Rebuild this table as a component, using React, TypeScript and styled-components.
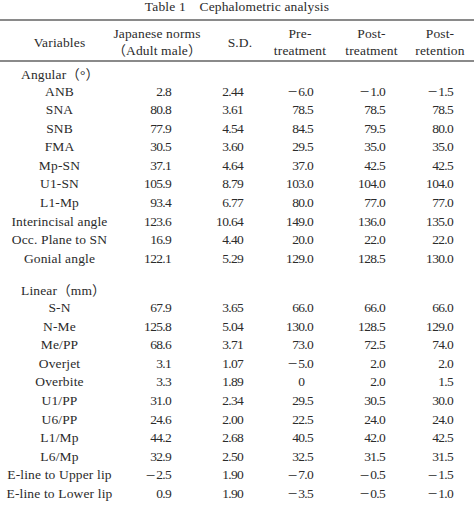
import React from 'react';
import styled, { createGlobalStyle } from 'styled-components';

/**
 * Table 1 - cephalometric analysis
 */

type Col = { width: number; shift: number; pad: number };

// one entry per column: track width, header shift (centre offset), right padding of the numbers
const COLS: Col[] = [
  { width: 119, shift: 0, pad: 0 },
  { width: 76, shift: 0, pad: 24 },
  { width: 84, shift: 3, pad: 36 },
  { width: 60, shift: -9, pad: 26 },
  { width: 71, shift: -3, pad: 25 },
  { width: 64, shift: -2, pad: 21 },
];

const TEMPLATE = COLS.map((c) => `${c.width}px`).join(' ');

type DataRow = [string, string, string, string, string, string];

const ANGULAR: DataRow[] = [
  ['ANB', '2.8', '2.44', '−6.0', '−1.0', '−1.5'],
  ['SNA', '80.8', '3.61', '78.5', '78.5', '78.5'],
  ['SNB', '77.9', '4.54', '84.5', '79.5', '80.0'],
  ['FMA', '30.5', '3.60', '29.5', '35.0', '35.0'],
  ['Mp-SN', '37.1', '4.64', '37.0', '42.5', '42.5'],
  ['U1-SN', '105.9', '8.79', '103.0', '104.0', '104.0'],
  ['L1-Mp', '93.4', '6.77', '80.0', '77.0', '77.0'],
  ['Interincisal angle', '123.6', '10.64', '149.0', '136.0', '135.0'],
  ['Occ. Plane to SN', '16.9', '4.40', '20.0', '22.0', '22.0'],
  ['Gonial angle', '122.1', '5.29', '129.0', '128.5', '130.0'],
];

const LINEAR: DataRow[] = [
  ['S-N', '67.9', '3.65', '66.0', '66.0', '66.0'],
  ['N-Me', '125.8', '5.04', '130.0', '128.5', '129.0'],
  ['Me/PP', '68.6', '3.71', '73.0', '72.5', '74.0'],
  ['Overjet', '3.1', '1.07', '−5.0', '2.0', '2.0'],
  ['Overbite', '3.3', '1.89', '0', '2.0', '1.5'],
  ['U1/PP', '31.0', '2.34', '29.5', '30.5', '30.0'],
  ['U6/PP', '24.6', '2.00', '22.5', '24.0', '24.0'],
  ['L1/Mp', '44.2', '2.68', '40.5', '42.0', '42.5'],
  ['L6/Mp', '32.9', '2.50', '32.5', '31.5', '31.5'],
  ['E-line to Upper lip', '−2.5', '1.90', '−7.0', '−0.5', '−1.5'],
  ['E-line to Lower lip', '0.9', '1.90', '−3.5', '−0.5', '−1.0'],
];

const HEADERS: string[][] = [
  ['Variables'],
  ['Japanese norms', '（Adult male）'],
  ['S.D.'],
  ['Pre-', 'treatment'],
  ['Post-', 'treatment'],
  ['Post-', 'retention'],
];

const Num = ({ value }: { value: string }) => {
  const negative = value.startsWith('−');
  const digits = negative ? value.slice(1) : value;
  return (
    <>
      {negative && <Minus>−</Minus>}
      {digits}
      {!digits.includes('.') && <Ghost>.0</Ghost>}
    </>
  );
};

const Rows = ({ rows }: { rows: DataRow[] }) => (
  <>
    {rows.map((r) => (
      <Row key={r[0]}>
        <Variable>{r[0]}</Variable>
        {r.slice(1).map((v, i) => (
          <Value key={i} $pad={COLS[i + 1].pad}>
            <Num value={v} />
          </Value>
        ))}
      </Row>
    ))}
  </>
);

const App = () => {
  return (
    <Page>
      <GlobalStyle />
      <Title>Table 1　Cephalometric analysis</Title>
      <Table>
        <Header>
          {HEADERS.map((lines, i) => (
            <HeadCell key={i} $shift={COLS[i].shift}>
              {lines.map((l) => (
                <span key={l}>{l}</span>
              ))}
            </HeadCell>
          ))}
        </Header>
        <Section $gap={5}>
          <SectionLabel>Angular（°）</SectionLabel>
          <Rows rows={ANGULAR} />
        </Section>
        <Section $gap={15}>
          <SectionLabel>Linear（mm）</SectionLabel>
          <Rows rows={LINEAR} />
        </Section>
      </Table>
    </Page>
  );
};

export default App;

const SERIF = `"Liberation Serif", "Noto Sans CJK JP", serif`;

const GlobalStyle = createGlobalStyle`
  html, body {
    margin: 0;
    padding: 0;
    background: #ffffff;
    overflow: hidden;
  }
  body {
    font-family: ${SERIF};
    font-size: 13.5px;
    color: #2b2b2b;
  }
`;

const Page = styled.div`
  width: 474px;
  height: 506px;
  overflow: hidden;
  background: #ffffff;
  font-family: ${SERIF};
  font-size: 13.5px;
  color: #2b2b2b;
`;

const Title = styled.div`
  height: 19px;
  line-height: 14px;
  letter-spacing: 0.15px;
  text-align: center;
  white-space: nowrap;
`;

const Table = styled.div`
  border-top: 2px solid #8a8a8a;
`;

const Header = styled.div`
  display: grid;
  grid-template-columns: ${TEMPLATE};
  padding: 4px 0 1px;
  border-bottom: 2px solid #8a8a8a;
`;

const HeadCell = styled.div<{ $shift: number }>`
  display: flex;
  flex-direction: column;
  align-items: center;
  justify-content: center;
  line-height: 17px;
  letter-spacing: 0.15px;
  white-space: nowrap;
  padding-left: ${(p) => (p.$shift > 0 ? p.$shift * 2 : 0)}px;
  padding-right: ${(p) => (p.$shift < 0 ? -p.$shift * 2 : 0)}px;
`;

const Section = styled.div<{ $gap: number }>`
  padding-top: ${(p) => p.$gap}px;
`;

const SectionLabel = styled.div`
  line-height: 15.5px;
  padding-left: 21px;
  letter-spacing: 0.15px;
  white-space: nowrap;
`;

const Row = styled.div`
  display: grid;
  grid-template-columns: ${TEMPLATE};
  height: 18.6px;
  line-height: 18.6px;
`;

const Variable = styled.div`
  text-align: center;
  letter-spacing: 0.15px;
  white-space: nowrap;
`;

const Value = styled.div<{ $pad: number }>`
  text-align: right;
  padding-right: ${(p) => p.$pad}px;
  letter-spacing: -0.7px;
  white-space: nowrap;
`;

const Minus = styled.span`
  font-size: 17px;
  line-height: 0;
  letter-spacing: 0;
  margin-right: 1px;
  vertical-align: -1.5px;
`;

const Ghost = styled.span`
  visibility: hidden;
`;
